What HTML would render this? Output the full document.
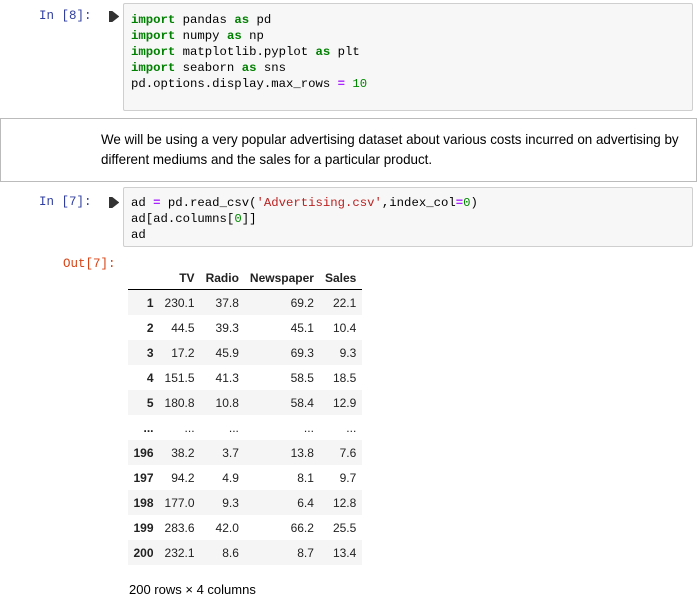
<!DOCTYPE html>
<html><head><style>
body{margin:0;width:700px;height:606px;background:#fff;position:relative;font-family:"Liberation Sans",sans-serif;overflow:hidden}
.abs{position:absolute}
.code{position:absolute;left:123px;right:7px;background:#f7f7f7;border:1px solid #cfcfcf;border-radius:2px;font-family:"Liberation Mono",monospace;font-size:12.3px;line-height:16px;padding:8px 0 0 7px;box-sizing:border-box;color:#000;white-space:pre}
.k{color:#008000;font-weight:bold}.o{color:#aa22ff;font-weight:bold}.n{color:#080}.s{color:#ba2121}
.lab{position:absolute;font-family:"Liberation Mono",monospace;font-size:12.5px;color:#303f9f}
.run{position:absolute;left:109px;width:10px;height:11px}
table{position:absolute;left:128px;top:266px;border-collapse:collapse;font-size:12px;color:#222}
td,th{height:25px;padding:0 5.5px;text-align:right;white-space:nowrap}
thead th{border-bottom:1px solid #000;height:23px}
tbody tr:nth-child(odd){background:#f5f5f5}
tbody th{font-weight:bold}
</style></head><body>
<div class="lab" style="left:39px;top:9px">In [8]:</div>
<svg class="run" style="top:11px" viewBox="0 0 10 11"><path d="M0.8 0V11M2 0L9 5.5L2 11Z" stroke="#333" stroke-width="1.6" fill="#333"/></svg>
<div class="code" style="top:3px;height:108px"><span class="k">import</span> pandas <span class="k">as</span> pd
<span class="k">import</span> numpy <span class="k">as</span> np
<span class="k">import</span> matplotlib.pyplot <span class="k">as</span> plt
<span class="k">import</span> seaborn <span class="k">as</span> sns
pd.options.display.max_rows <span class="o">=</span> <span class="n">10</span></div>
<div class="abs" style="left:0;top:118px;width:697px;height:64px;border:1px solid #bbb;box-sizing:border-box"></div>
<div class="abs" style="left:101px;top:130px;font-size:13.8px;line-height:20px;color:#000;transform:scaleX(0.971);transform-origin:0 0;white-space:nowrap">We will be using a very popular advertising dataset about various costs incurred on advertising by<br>different mediums and the sales for a particular product.</div>
<div class="lab" style="left:39px;top:195px">In [7]:</div>
<svg class="run" style="top:197px" viewBox="0 0 10 11"><path d="M0.8 0V11M2 0L9 5.5L2 11Z" stroke="#333" stroke-width="1.6" fill="#333"/></svg>
<div class="code" style="top:187px;height:60px;padding-top:7px">ad <span class="o">=</span> pd.read_csv(<span class="s">'Advertising.csv'</span>,index_col<span class="o">=</span><span class="n">0</span>)
ad[ad.columns[<span class="n">0</span>]]
ad</div>
<div class="lab" style="left:63px;top:257px;color:#d84315">Out[7]:</div>
<table>
<thead><tr><th style="width:15px"></th><th>TV</th><th>Radio</th><th>Newspaper</th><th>Sales</th></tr></thead>
<tbody>
<tr><th>1</th><td>230.1</td><td>37.8</td><td>69.2</td><td>22.1</td></tr>
<tr><th>2</th><td>44.5</td><td>39.3</td><td>45.1</td><td>10.4</td></tr>
<tr><th>3</th><td>17.2</td><td>45.9</td><td>69.3</td><td>9.3</td></tr>
<tr><th>4</th><td>151.5</td><td>41.3</td><td>58.5</td><td>18.5</td></tr>
<tr><th>5</th><td>180.8</td><td>10.8</td><td>58.4</td><td>12.9</td></tr>
<tr><th>...</th><td>...</td><td>...</td><td>...</td><td>...</td></tr>
<tr><th>196</th><td>38.2</td><td>3.7</td><td>13.8</td><td>7.6</td></tr>
<tr><th>197</th><td>94.2</td><td>4.9</td><td>8.1</td><td>9.7</td></tr>
<tr><th>198</th><td>177.0</td><td>9.3</td><td>6.4</td><td>12.8</td></tr>
<tr><th>199</th><td>283.6</td><td>42.0</td><td>66.2</td><td>25.5</td></tr>
<tr><th>200</th><td>232.1</td><td>8.6</td><td>8.7</td><td>13.4</td></tr>
</tbody></table>
<div class="abs" style="left:129px;top:582px;font-size:13px">200 rows × 4 columns</div>
</body></html>
